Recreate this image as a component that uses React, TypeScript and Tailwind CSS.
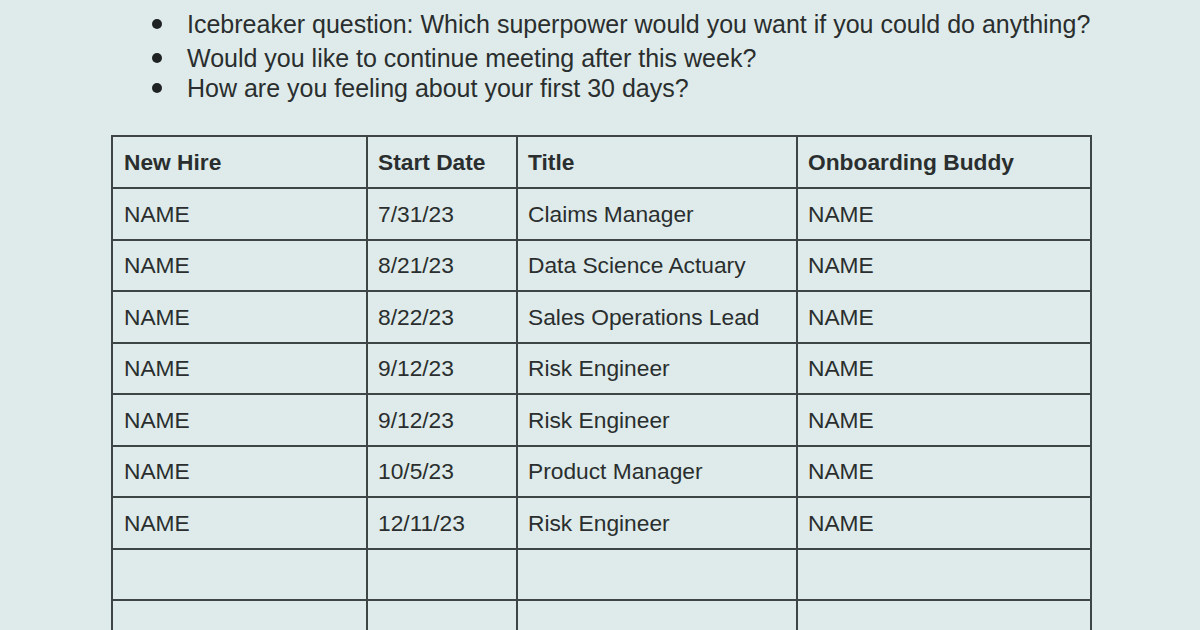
import React from 'react';

const questions = [
  'Icebreaker question: Which superpower would you want if you could do anything?',
  'Would you like to continue meeting after this week?',
  'How are you feeling about your first 30 days?',
];

const hires = [
  ['NAME', '7/31/23', 'Claims Manager', 'NAME'],
  ['NAME', '8/21/23', 'Data Science Actuary', 'NAME'],
  ['NAME', '8/22/23', 'Sales Operations Lead', 'NAME'],
  ['NAME', '9/12/23', 'Risk Engineer', 'NAME'],
  ['NAME', '9/12/23', 'Risk Engineer', 'NAME'],
  ['NAME', '10/5/23', 'Product Manager', 'NAME'],
  ['NAME', '12/11/23', 'Risk Engineer', 'NAME'],
  ['', '', '', ''],
  ['', '', '', ''],
];

const headers = ['New Hire', 'Start Date', 'Title', 'Onboarding Buddy'];

const App = () => {
  return (
    <div
      className="w-[1200px] h-[630px] overflow-hidden bg-[#deebea] text-[#2a2e2e]"
      style={{ fontFamily: '"Liberation Sans", Arial, sans-serif' }}
    >
      {/* Discussion questions */}
      <ul className="pl-[187px] pt-[9px] text-[25px] leading-[30px]">
        {questions.map((q, i) => (
          <li key={q} className={i === 0 ? 'relative mb-[4px]' : 'relative'}>
            <span className="absolute -left-[35px] top-[10px] w-[10px] h-[10px] rounded-full bg-[#1f2222]" />
            {q}
          </li>
        ))}
      </ul>

      {/* New hire table */}
      <table className="ml-[111px] mt-[32px] w-[979px] border-collapse text-[22.75px] table-fixed">
        <colgroup>
          <col className="w-[255px]" />
          <col className="w-[150px]" />
          <col className="w-[280px]" />
          <col className="w-[294px]" />
        </colgroup>
        <thead>
          <tr className="h-[52px]">
            {headers.map((h, i) => (
              <th
                key={h}
                className={
                  i === 0
                    ? 'border-2 border-[#3d4545] pl-[11px] pr-[10px] text-left font-bold'
                    : 'border-2 border-[#3d4545] px-[10px] text-left font-bold'
                }
              >
                {h}
              </th>
            ))}
          </tr>
        </thead>
        <tbody>
          {hires.map((row, i) => (
            <tr key={i} className="h-[51.5px]">
              {row.map((cell, j) => (
                <td
                  key={j}
                  className={
                    j === 0
                      ? 'border-2 border-[#3d4545] pl-[11px] pr-[10px]'
                      : 'border-2 border-[#3d4545] px-[10px]'
                  }
                >
                  {cell}
                </td>
              ))}
            </tr>
          ))}
        </tbody>
      </table>
    </div>
  );
};

export default App;
